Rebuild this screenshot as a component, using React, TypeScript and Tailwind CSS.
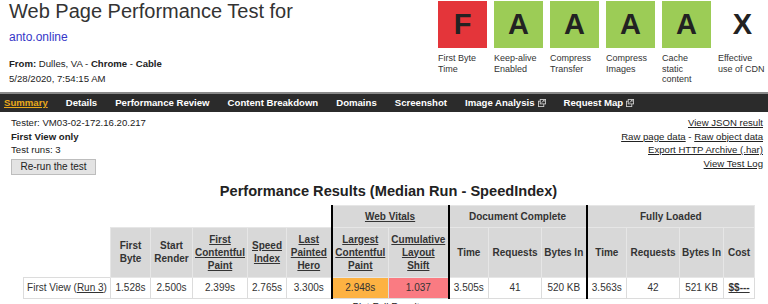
import React from "react";

const grades = [
  { letter: "F", label: ["First Byte", "Time"], bg: "bg-[#e4353a]" },
  { letter: "A", label: ["Keep-alive", "Enabled"], bg: "bg-[#9ccc56]" },
  { letter: "A", label: ["Compress", "Transfer"], bg: "bg-[#9ccc56]" },
  { letter: "A", label: ["Compress", "Images"], bg: "bg-[#9ccc56]" },
  { letter: "A", label: ["Cache", "static", "content"], bg: "bg-[#9ccc56]" },
  { letter: "X", label: ["Effective", "use of CDN"], bg: "bg-white" },
];

const navItems = [
  "Summary",
  "Details",
  "Performance Review",
  "Content Breakdown",
  "Domains",
  "Screenshot",
];

const ExternalIcon = () => (
  <svg width="8" height="8" viewBox="0 0 9 9" className="ml-[3px] inline-block">
    <rect x="0.5" y="2.5" width="6" height="6" fill="none" stroke="#ccc" />
    <rect x="2.5" y="0.5" width="6" height="5" fill="#2b2b2b" stroke="#ccc" />
    <path d="M4 4 L7 1.5 M5.5 1.5 H7 V3" stroke="#ccc" fill="none" />
  </svg>
);

const th = "border border-[#e6e6e6] bg-[#d8d8d8] font-bold text-[10px] leading-[13px] text-center text-[#333] p-0";
const thick = "border-l-2 border-l-black";
const td = "border border-[#dcdcdc] text-[10px] text-center text-[#333] p-0 h-[21px]";

export default function App() {
  return (
    <div className="w-[768px] h-[304px] overflow-hidden bg-white text-[#222] font-['Liberation_Sans',Arial,sans-serif]">
      {/* header */}
      <div className="flex h-[92px]">
        <div className="w-[438px] pl-[9px]">
          <h1 className="text-[20px] leading-[22px] text-[#333]">Web Page Performance Test for</h1>
          <a className="mt-[8px] block text-[12px] leading-[14px] text-[#3636c8]">anto.online</a>
          <div className="mt-[13px] text-[9.6px] leading-[13px]">
            <b>From:</b> Dulles, VA - <b>Chrome</b> - <b>Cable</b>
          </div>
          <div className="mt-[2px] text-[9.6px] leading-[13px]">5/28/2020, 7:54:15 AM</div>
        </div>
        <div className="flex gap-[7px] pt-[1px]">
          {grades.map((g, i) => (
            <div key={i} className="w-[49px]">
              <div className={`flex h-[47px] items-center justify-center text-[29px] font-bold text-[#222] ${g.bg}`}>
                {g.letter}
              </div>
              <div className="mt-[5px] text-[9px] leading-[10.5px] text-[#333]">
                {g.label.map((l) => (
                  <div key={l}>{l}</div>
                ))}
              </div>
            </div>
          ))}
        </div>
      </div>

      {/* nav */}
      <div className="flex h-[20px] items-center gap-[18px] border-t-2 border-[#8a8a8a] bg-[#2b2b2b] pl-[4px] text-[9.6px] font-bold text-white">
        {navItems.map((n, i) => (
          <span key={n} className={i === 0 ? "text-[#e9a91b] underline" : ""}>
            {n}
          </span>
        ))}
        <span className="flex items-center">
          Image Analysis
          <ExternalIcon />
        </span>
        <span className="flex items-center">
          Request Map
          <ExternalIcon />
        </span>
      </div>

      {/* info */}
      <div className="flex justify-between pt-[4px] text-[9.6px] leading-[13.5px]">
        <div className="pl-[11px]">
          <div>Tester: VM03-02-172.16.20.217</div>
          <div className="font-bold">First View only</div>
          <div>Test runs: 3</div>
          <button className="mt-[2px] h-[16px] w-[85px] border border-[#bdbdbd] bg-[#e3e3e3] text-[10px] leading-[14px] text-[#222]">
            Re-run the test
          </button>
        </div>
        <div className="pr-[5px] text-right">
          <div><a className="underline">View JSON result</a></div>
          <div>
            <a className="underline">Raw page data</a> - <a className="underline">Raw object data</a>
          </div>
          <div><a className="underline">Export HTTP Archive (.har)</a></div>
          <div><a className="underline">View Test Log</a></div>
        </div>
      </div>

      {/* results */}
      <div className="ml-[23px] mt-[8px] w-[731px]">
        <h2 className="text-center text-[14.6px] font-bold leading-[17px] text-[#222]">
          Performance Results (Median Run - SpeedIndex)
        </h2>
        <table className="mt-[5px] w-[731px] table-fixed border-collapse">
          <colgroup>
            {[87, 40, 42, 55, 39, 45, 57, 60, 40, 53, 45, 40, 53, 44, 31].map((w, i) => (
              <col key={i} style={{ width: w }} />
            ))}
          </colgroup>
          <thead>
            <tr className="h-[22px]">
              <th colSpan={6} className="border-0 p-0"></th>
              <th colSpan={2} className={`${th} ${thick}`}>
                <span className="underline">Web Vitals</span>
              </th>
              <th colSpan={3} className={`${th} ${thick}`}>Document Complete</th>
              <th colSpan={4} className={`${th} ${thick}`}>Fully Loaded</th>
            </tr>
            <tr className="h-[50px]">
              <th className="border-0 p-0"></th>
              <th className={th}>First<br />Byte</th>
              <th className={th}>Start<br />Render</th>
              <th className={th}><span className="underline">First<br />Contentful<br />Paint</span></th>
              <th className={th}><span className="underline">Speed<br />Index</span></th>
              <th className={th}><span className="underline">Last<br />Painted<br />Hero</span></th>
              <th className={`${th} ${thick}`}><span className="underline">Largest<br />Contentful<br />Paint</span></th>
              <th className={th}><span className="underline">Cumulative<br />Layout<br />Shift</span></th>
              <th className={`${th} ${thick}`}>Time</th>
              <th className={th}>Requests</th>
              <th className={th}>Bytes In</th>
              <th className={`${th} ${thick}`}>Time</th>
              <th className={th}>Requests</th>
              <th className={th}>Bytes In</th>
              <th className={th}>Cost</th>
            </tr>
          </thead>
          <tbody>
            <tr>
              <td className={td}>
                First View (<span className="underline">Run 3</span>)
              </td>
              <td className={td}>1.528s</td>
              <td className={td}>2.500s</td>
              <td className={td}>2.399s</td>
              <td className={td}>2.765s</td>
              <td className={td}>3.300s</td>
              <td className={`${td} ${thick} bg-[#fdb242]`}>2.948s</td>
              <td className={`${td} bg-[#fa7b82]`}>1.037</td>
              <td className={`${td} ${thick}`}>3.505s</td>
              <td className={td}>41</td>
              <td className={td}>520 KB</td>
              <td className={`${td} ${thick}`}>3.563s</td>
              <td className={td}>42</td>
              <td className={td}>521 KB</td>
              <td className={td}>
                <span className="font-bold underline">$$---</span>
              </td>
            </tr>
          </tbody>
        </table>
        <div className="mt-[1px] text-center text-[10px] text-[#222]">Plot Full Results</div>
      </div>
    </div>
  );
}
